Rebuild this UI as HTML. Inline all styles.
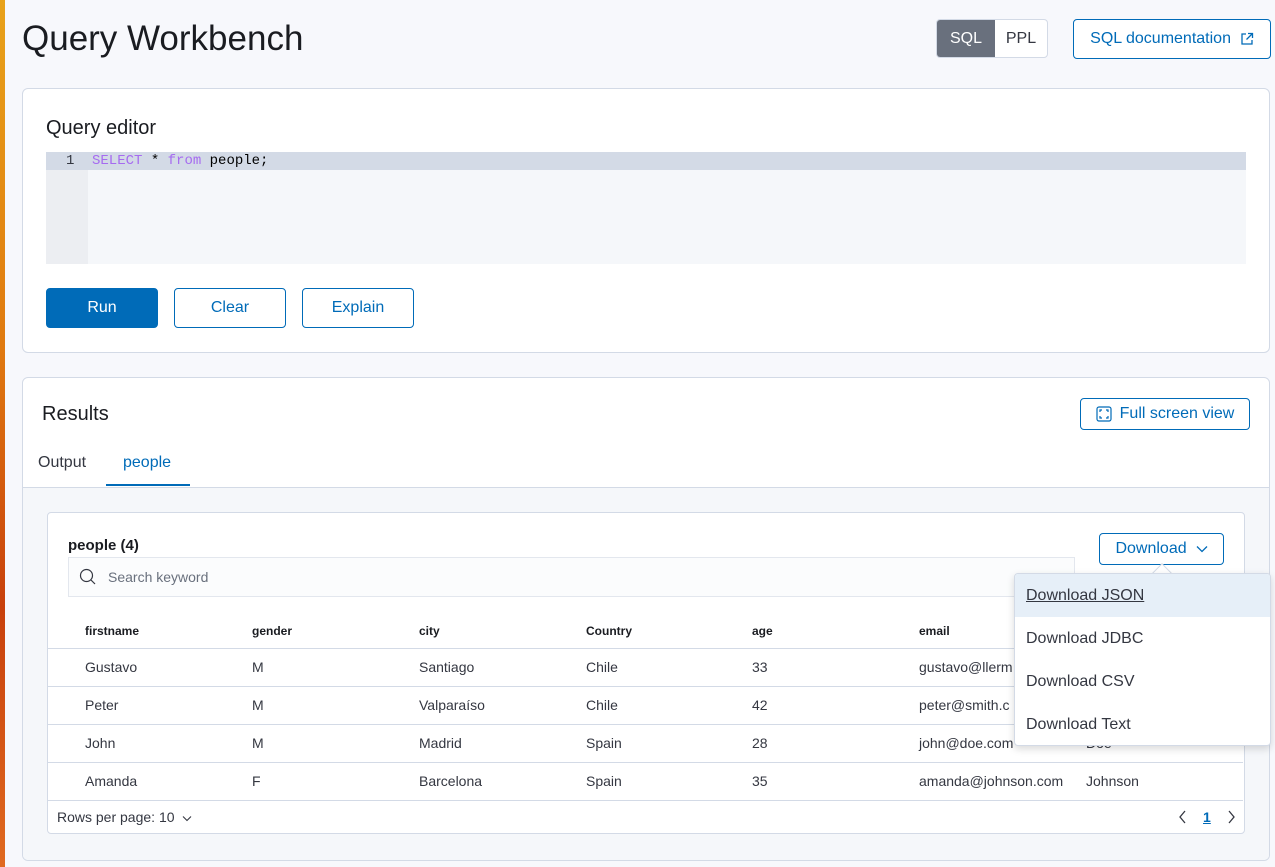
<!DOCTYPE html>
<html><head><meta charset="utf-8"><style>
*{box-sizing:border-box;margin:0;padding:0}
body{width:1275px;height:867px;overflow:hidden;background:#f7f8fc;font-family:"Liberation Sans",sans-serif;color:#343741;position:relative}
.abs{position:absolute}
.strip{left:0;top:0;width:5px;height:867px;background:linear-gradient(#e8a21a,#e07a10 40%,#c8400c 70%,#e06a20)}
.panel{background:#fff;border:1px solid #d3dae6;border-radius:6px}
.btn{border:1px solid #006bb8;border-radius:4px;color:#006bb8;font-size:16px;display:flex;align-items:center;justify-content:center;background:#fff}
.t{position:absolute;font-size:14px;color:#343741;white-space:nowrap}
.hd{font-weight:bold;font-size:12px;color:#1a1c21}
.line{position:absolute;left:48px;width:1195px;height:1px;background:#d3dae6}
.mono{font-family:"Liberation Mono",monospace;font-size:14px}
</style></head><body>
<div class="abs strip"></div>
<div class="abs" style="left:22px;top:19px;font-size:35px;color:#1a1c21">Query Workbench</div>
<div class="abs" style="left:936px;top:19px;width:112px;height:39px;border:1px solid #d3dae6;border-radius:4px;background:#fff;display:flex;overflow:hidden;font-size:16px">
<div style="width:58px;background:#69707d;color:#fff;display:flex;align-items:center;justify-content:center">SQL</div>
<div style="flex:1;display:flex;align-items:center;justify-content:center;color:#343741">PPL</div></div>
<div class="abs btn" style="left:1073px;top:19px;width:198px;height:40px">SQL documentation&nbsp;&nbsp;<svg width="14" height="14" viewBox="0 0 14 14" fill="none" stroke="#006bb8" stroke-width="1.3"><path d="M6 2H2v10h10V8M8 1.5h4.5V6M12.5 1.5L6.5 7.5"/></svg></div>

<div class="abs panel" style="left:22px;top:88px;width:1248px;height:265px"></div>
<div class="abs" style="left:46px;top:117px;font-size:20px;color:#1a1c21">Query editor</div>
<div class="abs" style="left:46px;top:152px;width:1200px;height:112px;background:#f5f7fa"></div>
<div class="abs" style="left:46px;top:152px;width:42px;height:112px;background:#eceef2"></div>
<div class="abs" style="left:46px;top:152px;width:1200px;height:18px;background:#d3dae6"></div>
<div class="abs mono" style="left:66px;top:152px;line-height:18px">1</div>
<div class="abs mono" style="left:92px;top:152px;line-height:18px;color:#000"><span style="color:#a66bf0">SELECT</span> * <span style="color:#a66bf0">from</span> people;</div>
<div class="abs btn" style="left:46px;top:288px;width:112px;height:40px;background:#006bb8;color:#fff;font-weight:500">Run</div>
<div class="abs btn" style="left:174px;top:288px;width:112px;height:40px">Clear</div>
<div class="abs btn" style="left:302px;top:288px;width:112px;height:40px">Explain</div>

<div class="abs panel" style="left:22px;top:377px;width:1248px;height:484px;overflow:hidden">
<div class="abs" style="left:0;top:109px;width:1248px;height:380px;background:#f5f7fa;border-top:1px solid #d3dae6"></div>
</div>
<div class="abs" style="left:42px;top:403px;font-size:20px;color:#1a1c21">Results</div>
<div class="abs btn" style="left:1080px;top:398px;width:170px;height:32px">
<svg width="16" height="16" viewBox="0 0 16 16" fill="none" stroke="#006bb8" stroke-width="1.2" style="margin-right:8px"><rect x="1" y="1" width="14" height="14" rx="2"/><path d="M4 6V4h2M10 4h2v2M12 10v2h-2M6 12H4v-2"/></svg>Full screen view</div>
<div class="abs" style="left:38px;top:454px;font-size:16px">Output</div>
<div class="abs" style="left:123px;top:454px;font-size:16px;color:#006bb8">people</div>
<div class="abs" style="left:106px;top:484px;width:84px;height:2px;background:#006bb8"></div>

<div class="abs panel" style="left:47px;top:512px;width:1198px;height:322px;border-radius:4px"></div>
<div class="abs" style="left:68px;top:537px;font-size:15px;font-weight:bold;color:#1a1c21">people (4)</div>
<div class="abs" style="left:68px;top:557px;width:1007px;height:40px;background:#fbfcfd;border:1px solid #e3e7ee"></div>
<svg class="abs" style="left:79px;top:568px" width="18" height="18" viewBox="0 0 18 18" fill="none" stroke="#343741" stroke-width="1.2"><circle cx="7.5" cy="7.5" r="6"/><path d="M12 12l4 4"/></svg>
<div class="t" style="left:108px;top:569px;color:#69707d">Search keyword</div>
<div class="abs btn" style="left:1099px;top:533px;width:125px;height:32px">Download&nbsp;&nbsp;<svg width="12" height="8" viewBox="0 0 12 8" fill="none" stroke="#006bb8" stroke-width="1.3"><path d="M1 1.5l5 5 5-5"/></svg></div>

<div class="t hd" style="left:85px;top:624px">firstname</div><div class="t hd" style="left:252px;top:624px">gender</div><div class="t hd" style="left:419px;top:624px">city</div><div class="t hd" style="left:586px;top:624px">Country</div><div class="t hd" style="left:752px;top:624px">age</div><div class="t hd" style="left:919px;top:624px">email</div>
<div class="line" style="top:648px"></div><div class="line" style="top:686px"></div><div class="line" style="top:724px"></div><div class="line" style="top:762px"></div><div class="line" style="top:800px"></div>
<div class="t" style="left:85px;top:659px">Gustavo</div><div class="t" style="left:252px;top:659px">M</div><div class="t" style="left:419px;top:659px">Santiago</div><div class="t" style="left:586px;top:659px">Chile</div><div class="t" style="left:752px;top:659px">33</div><div class="t" style="left:919px;top:659px">gustavo@llerm</div>
<div class="t" style="left:85px;top:697px">Peter</div><div class="t" style="left:252px;top:697px">M</div><div class="t" style="left:419px;top:697px">Valparaíso</div><div class="t" style="left:586px;top:697px">Chile</div><div class="t" style="left:752px;top:697px">42</div><div class="t" style="left:919px;top:697px">peter@smith.c</div>
<div class="t" style="left:85px;top:735px">John</div><div class="t" style="left:252px;top:735px">M</div><div class="t" style="left:419px;top:735px">Madrid</div><div class="t" style="left:586px;top:735px">Spain</div><div class="t" style="left:752px;top:735px">28</div><div class="t" style="left:919px;top:735px">john@doe.com</div><div class="t" style="left:1086px;top:735px">Doe</div>
<div class="t" style="left:85px;top:773px">Amanda</div><div class="t" style="left:252px;top:773px">F</div><div class="t" style="left:419px;top:773px">Barcelona</div><div class="t" style="left:586px;top:773px">Spain</div><div class="t" style="left:752px;top:773px">35</div><div class="t" style="left:919px;top:773px">amanda@johnson.com</div><div class="t" style="left:1086px;top:773px">Johnson</div>
<div class="t" style="left:57px;top:809px;font-size:14px">Rows per page: 10&nbsp; <svg width="10" height="7" viewBox="0 0 10 7" fill="none" stroke="#343741" stroke-width="1.1"><path d="M1 1.5l4 4 4-4"/></svg></div>
<svg class="abs" style="left:1178px;top:810px" width="10" height="14" viewBox="0 0 10 14" fill="none" stroke="#343741" stroke-width="1.3"><path d="M7 1L2 7l5 6"/></svg>
<div class="t" style="left:1203px;top:809px;color:#006bb8;font-weight:bold;text-decoration:underline">1</div>
<svg class="abs" style="left:1226px;top:810px" width="10" height="14" viewBox="0 0 10 14" fill="none" stroke="#343741" stroke-width="1.3"><path d="M3 1l5 6-5 6"/></svg>

<div class="abs" style="left:1155px;top:566px;width:14px;height:14px;background:#fff;transform:rotate(45deg);border-left:1px solid #d3dae6;border-top:1px solid #d3dae6"></div>
<div class="abs" style="left:1014px;top:573px;width:257px;height:173px;background:#fff;border:1px solid #d3dae6;border-radius:4px;box-shadow:0 3px 8px rgba(0,0,0,.15);overflow:hidden;font-size:16px">
<div style="height:43px;background:#e6eff8;padding:13px 0 0 11px;text-decoration:underline;color:#343741">Download JSON</div>
<div style="height:43px;padding:13px 0 0 11px">Download JDBC</div>
<div style="height:43px;padding:13px 0 0 11px">Download CSV</div>
<div style="height:43px;padding:13px 0 0 11px">Download Text</div>
</div>
</body></html>
